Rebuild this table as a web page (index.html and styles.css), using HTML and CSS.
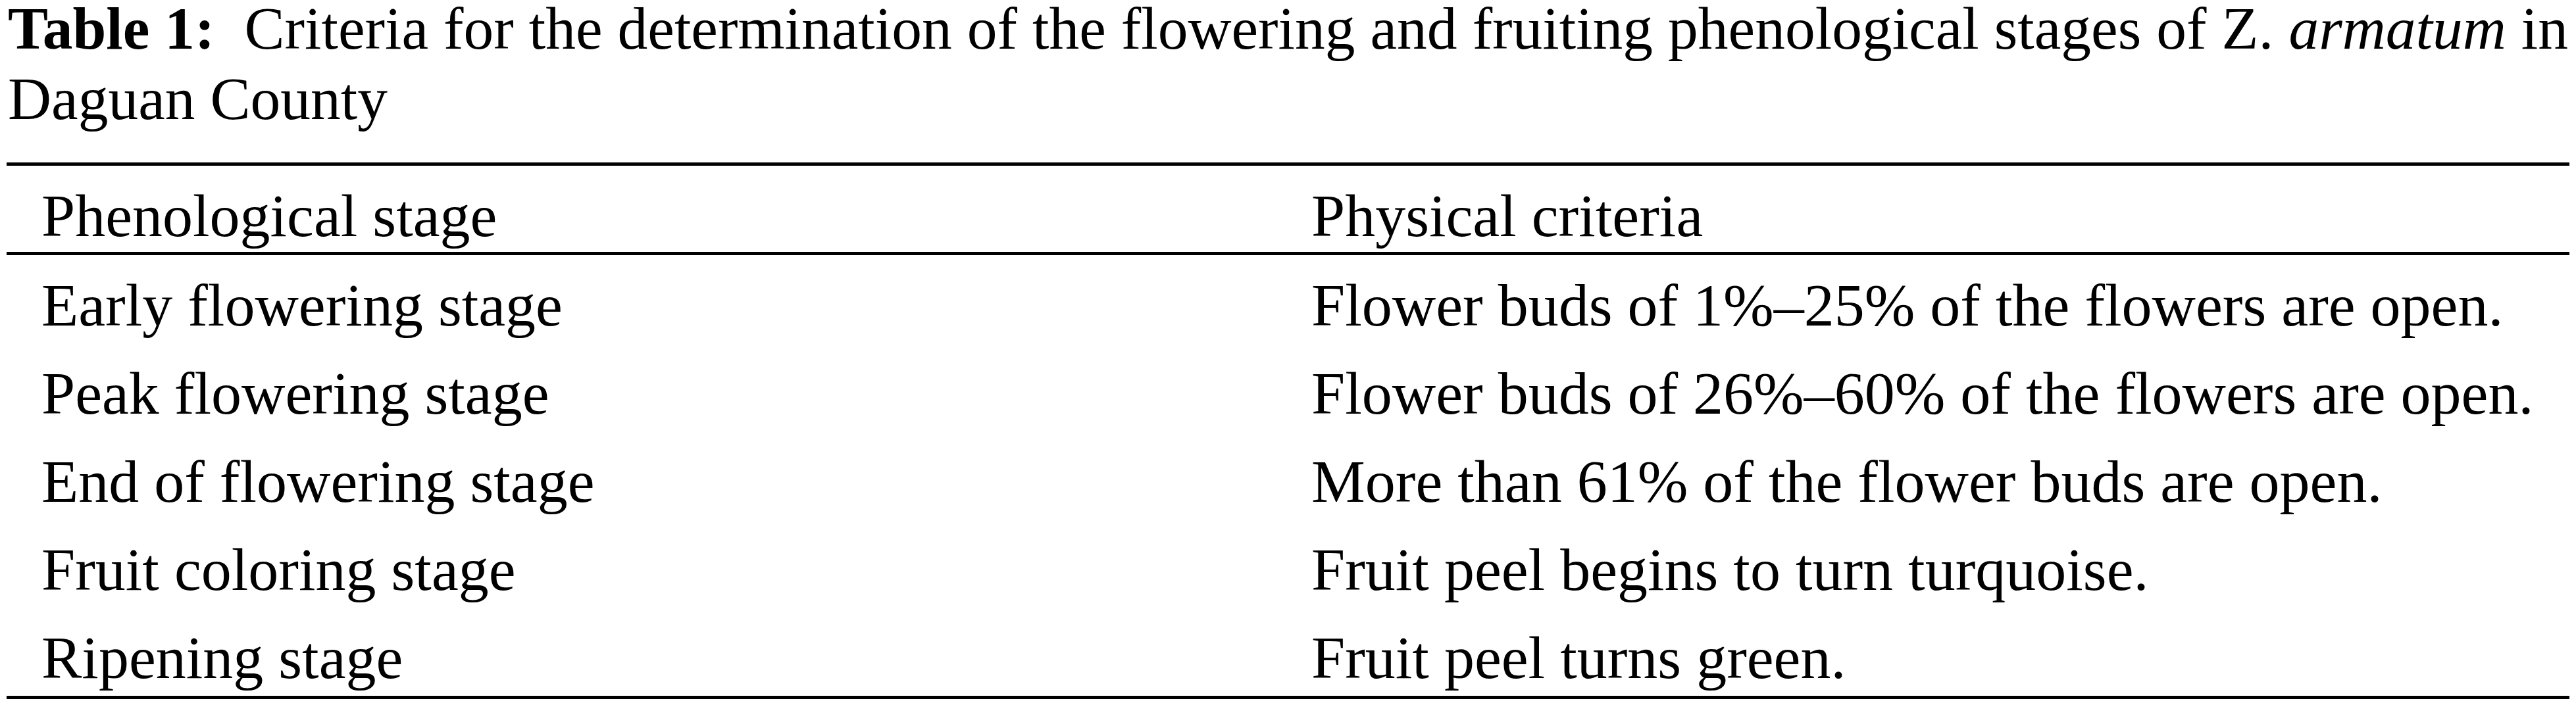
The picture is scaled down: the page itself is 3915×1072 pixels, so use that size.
FILE: index.html
```html
<!DOCTYPE html>
<html lang="en">
<head>
<meta charset="utf-8">
<title>Table 1</title>
<link rel="stylesheet" href="styles.css">
</head>
<body>
<div class="page">
  <div class="caption">
    <span class="cap-line cap-first"><b class="label">Table 1:</b> Criteria for the determination of the flowering and fruiting phenological stages of Z. <i>armatum</i> in</span>
    <span class="cap-line">Daguan County</span>
  </div>
  <table class="tbl">
    <thead>
      <tr>
        <th class="c1">Phenological stage</th>
        <th class="c2">Physical criteria</th>
      </tr>
    </thead>
    <tbody>
      <tr><td class="c1">Early flowering stage</td><td class="c2">Flower buds of 1%–25% of the flowers are open.</td></tr>
      <tr><td class="c1">Peak flowering stage</td><td class="c2">Flower buds of 26%–60% of the flowers are open.</td></tr>
      <tr><td class="c1">End of flowering stage</td><td class="c2">More than 61% of the flower buds are open.</td></tr>
      <tr><td class="c1">Fruit coloring stage</td><td class="c2">Fruit peel begins to turn turquoise.</td></tr>
      <tr><td class="c1">Ripening stage</td><td class="c2">Fruit peel turns green.</td></tr>
    </tbody>
  </table>
</div>
</body>
</html>
```
FILE: styles.css
```css
html, body {
  margin: 0;
  padding: 0;
  background: #ffffff;
}
body {
  font-family: "Liberation Serif", "Times New Roman", serif;
  color: #000000;
}
.page {
  width: 3895px;
  padding-left: 10px;
}
.caption {
  margin-top: -10px;
  padding-left: 2px;
  padding-right: 2px;
  margin-bottom: 43px;
  font-size: 91.5px;
  line-height: 107px;
}
.cap-line {
  display: block;
}
.cap-first {
  word-spacing: -4px;
  text-align: justify;
  text-align-last: justify;
}
.label {
  font-weight: bold;
  margin-right: 22px;
}
.tbl {
  width: 3895px;
  border-collapse: separate;
  border-spacing: 0;
  border-top: 5px solid #000;
  border-bottom: 5px solid #000;
  font-size: 92px;
  table-layout: fixed;
}
.tbl th, .tbl td {
  font-weight: normal;
  text-align: left;
  line-height: 102px;
  padding: 25px 0 7px 53px;
  white-space: nowrap;
  vertical-align: top;
}
.tbl th {
  padding-bottom: 4px;
  border-bottom: 5px solid #000;
}
.tbl .c1 {
  width: 1877px;
}
```
